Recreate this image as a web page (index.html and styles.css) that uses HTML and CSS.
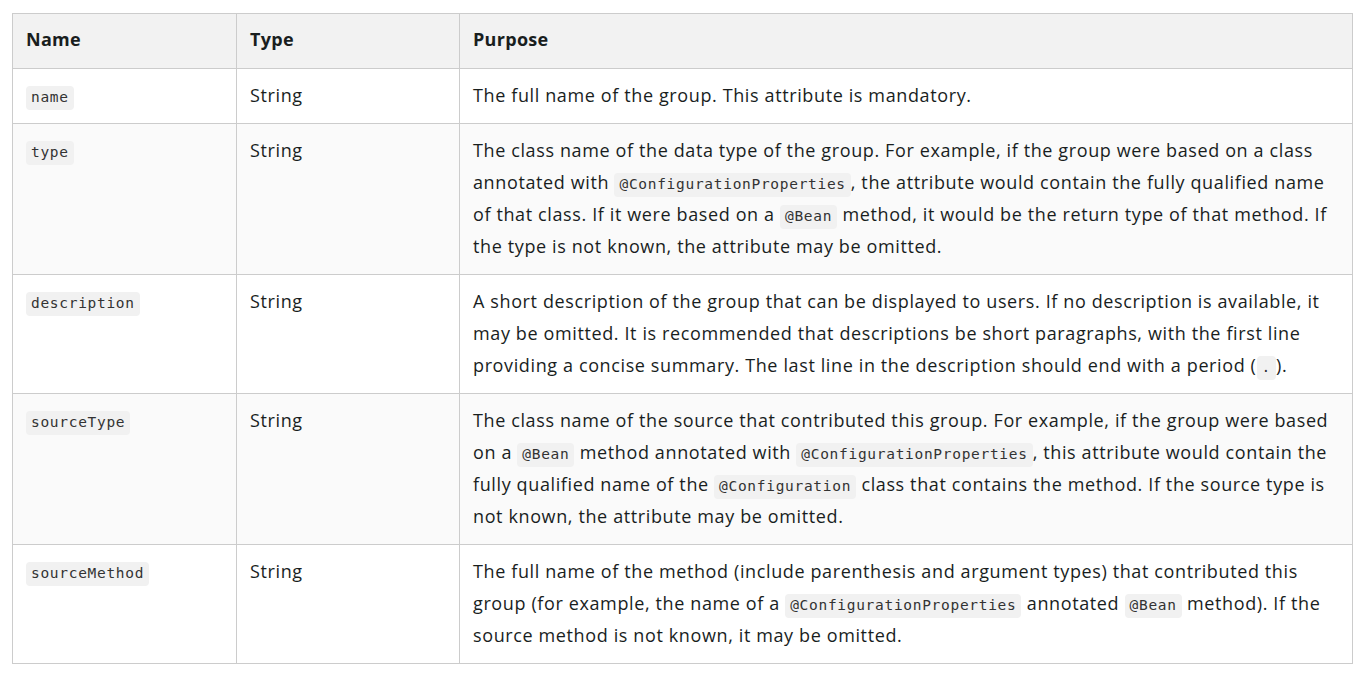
FILE: index.html
```html
<!DOCTYPE html>
<html>
<head>
<meta charset="utf-8">
<link rel="stylesheet" href="styles.css">
</head>
<body>
<table class="tbl">
  <colgroup>
    <col class="c1"><col class="c2"><col class="c3">
  </colgroup>
  <thead>
    <tr><th>Name</th><th>Type</th><th>Purpose</th></tr>
  </thead>
  <tbody>
    <tr>
      <td><code>name</code></td>
      <td>String</td>
      <td>The full name of the group. This attribute is mandatory.</td>
    </tr>
    <tr class="alt">
      <td><code>type</code></td>
      <td>String</td>
      <td>The class name of the data type of the group. For example, if the group were based on a class annotated with <code>@ConfigurationProperties</code>, the attribute would contain the fully qualified name of that class. If it were based on a <code>@Bean</code> method, it would be the return type of that method. If the type is not known, the attribute may be omitted.</td>
    </tr>
    <tr>
      <td><code>description</code></td>
      <td>String</td>
      <td>A short description of the group that can be displayed to users. If no description is available, it may be omitted. It is recommended that descriptions be short paragraphs, with the first line providing a concise summary. The last line in the description should end with a period (<code>.</code>).</td>
    </tr>
    <tr class="alt">
      <td><code>sourceType</code></td>
      <td>String</td>
      <td>The class name of the source that contributed this group. For example, if the group were based on a <code>@Bean</code> method annotated with <code>@ConfigurationProperties</code>, this attribute would contain the fully qualified name of the <code>@Configuration</code> class that contains the method. If the source type is not known, the attribute may be omitted.</td>
    </tr>
    <tr>
      <td><code>sourceMethod</code></td>
      <td>String</td>
      <td>The full name of the method (include parenthesis and argument types) that contributed this group (for example, the name of a <code>@ConfigurationProperties</code> annotated <code>@Bean</code> method). If the source method is not known, it may be omitted.</td>
    </tr>
  </tbody>
</table>
</body>
</html>
```
FILE: styles.css
```css
html, body {
  margin: 0;
  padding: 0;
  background: #ffffff;
}
body {
  padding: 13px 17px 0 12px;
  font-family: "Open Sans", "Liberation Sans", sans-serif;
  font-size: 18px;
  letter-spacing: 0.62px;
  line-height: 32px;
  color: #191e1e;
}
.tbl {
  width: 1341px;
  border-collapse: collapse;
  table-layout: fixed;
}
.c1 { width: 224px; }
.c2 { width: 223px; }
.c3 { width: auto; }
.tbl th, .tbl td {
  border: 1px solid #cccccc;
  text-align: left;
  vertical-align: top;
  padding: 10px 13px 12px 13px;
}
.tbl th {
  background: #f2f2f2;
  font-weight: 700;
  letter-spacing: 0.3px;
  padding-top: 9px;
  padding-bottom: 13px;
}
.tbl tr.alt td {
  background: #fafafa;
}
code {
  font-family: "DejaVu Sans Mono", "Liberation Mono", monospace;
  font-size: 14.5px;
  letter-spacing: 0.7px;
  line-height: 1;
  color: #333333;
  background: #f1f1f1;
  border-radius: 4px;
  padding: 3px 5px 5px 5px;
}
```
